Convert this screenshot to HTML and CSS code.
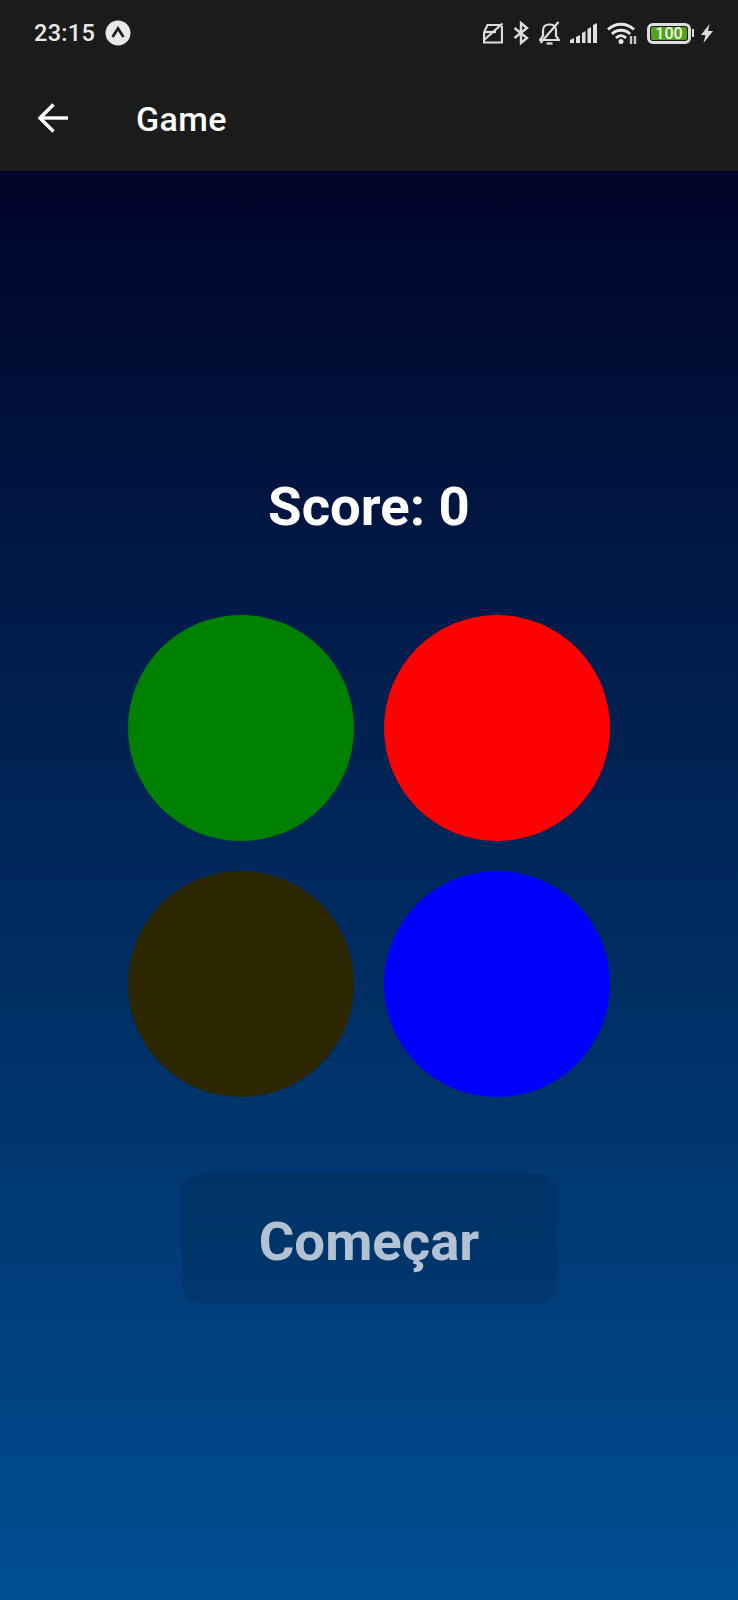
FILE: index.html
```html
<!DOCTYPE html>
<html lang="pt">
<head>
<meta charset="utf-8">
<title>Game</title>
<link rel="stylesheet" href="styles.css">
</head>
<body>
<div class="app">
  <header class="topbar">
    <div class="status">
      <div class="status-left">
        <span class="clock">23:15</span>
        <svg class="expo" viewBox="0 0 26 26"><circle cx="13" cy="13" r="12.5" fill="#e8e8e8"/><path d="M7.500 17 L13 8.500 L18.500 17" fill="none" stroke="#1c1c1c" stroke-width="2.600"/></svg>
      </div>
      <div class="status-right">
        <svg class="ic" width="20" height="22" viewBox="0 0 20 22" fill="none" stroke="#dcdcdc" stroke-width="2.200"><path d="M1.100 10 V20.500 H19 V4"/><path d="M1.100 10 L4.500 3 H19"/><path d="M1 10 H13"/><path d="M1 18 L19.500 1.500"/></svg>
        <svg class="ic" width="16" height="24" viewBox="0 0 16 24" fill="none" stroke="#dcdcdc" stroke-width="2.400"><path d="M1.500 7 L14 17 L8 22 V2 L14 7 L1.500 17"/></svg>
        <svg class="ic" width="21" height="24" viewBox="0 0 21 24" fill="none" stroke="#dcdcdc" stroke-width="2.200"><path d="M1 19 H20 L17 15 V9.500 C17 5.500 14.500 3.500 10.500 3.500 C6.500 3.500 4 5.500 4 9.500 V15 Z"/><path d="M7.500 22.500 H13.500"/><path d="M1.500 22 L19.500 1"/></svg>
        <svg class="ic" width="27" height="20" viewBox="0 0 27 20" fill="#e0e0e0"><polygon points="0,20 0,17 4,15 4,20"/><polygon points="6,20 6,14 10,12 10,20"/><polygon points="12,20 12,10 15.500,8 15.500,20"/><polygon points="17.500,20 17.500,6 21,4 21,20"/><polygon points="23,20 23,2 27,0 27,20"/></svg>
        <svg class="ic" width="30" height="22" viewBox="0 0 30 22" fill="none" stroke="#e8e8e8" stroke-width="3"><path d="M1 7.500 C8.500 0.500 19.500 0.500 27 7.500"/><path d="M5 12 C10 7 18 7 23 12"/><path d="M9 16 C12 13 16 13 19 16"/><circle cx="14" cy="19.500" r="2.500" fill="#e8e8e8" stroke="none"/><path d="M24 14 V22 M28 14 V22" stroke="#c8c8c8" stroke-width="2.400"/></svg>
        <div class="battery-wrap">
          <div class="battery"><span class="level">100</span></div>
          <span class="nub"></span>
        </div>
        <svg class="ic" width="12" height="19" viewBox="0 0 12 19" fill="#dcdcdc"><path d="M8.500 0 L0 11 H4.500 L2.500 19 L12 7 H7 Z"/></svg>
      </div>
    </div>
    <div class="nav">
      <svg class="back" width="30" height="30" viewBox="0 0 30 30" fill="none" stroke="#fff" stroke-width="3.400"><path d="M2 15 H30"/><path d="M15.500 1.500 L2 15 L15.500 28.500"/></svg>
      <h1 class="title">Game</h1>
    </div>
  </header>
  <main class="board">
    <p class="score">Score: 0</p>
    <div class="pads">
      <div class="pad pad-green"></div>
      <div class="pad pad-red"></div>
      <div class="pad pad-yellow"></div>
      <div class="pad pad-blue"></div>
    </div>
    <button class="start" type="button">Começar</button>
  </main>
</div>
</body>
</html>
```

FILE: styles.css
```css
* { box-sizing: border-box; }
html, body { margin: 0; padding: 0; height: 1600px; overflow: hidden; }
body { font-family: Roboto, "Liberation Sans", sans-serif; background: #000; }
.app { width: 738px; height: 1600px; display: flex; flex-direction: column; }
.topbar { height: 171px; background: #1b1b1b; flex: none; }
.status { height: 68px; display: flex; justify-content: space-between; align-items: center; padding: 0 0 2px 34px; }
.status-left { display: flex; align-items: center; gap: 10px; }
.clock { font-size: 23.500px; font-weight: 500; color: #e8e8e8; letter-spacing: 0.3px; }
.expo { width: 26px; height: 26px; display: block; }
.status-right { display: flex; align-items: center; gap: 10px; padding-right: 25px; }
.ic { display: block; flex: none; }
.battery-wrap { display: flex; align-items: center; gap: 1px; margin-right: -3px; }
.battery { width: 44px; height: 21px; border: 3px solid #dedede; border-radius: 6px; padding: 1px; display: flex; }
.level { flex: 1; background: #4fa31a; border-radius: 2px; color: #f2f7ec; font-size: 16px; font-weight: 500; line-height: 13px; text-align: center; }
.nub { width: 2px; height: 8px; background: #dedede; }
.nav { height: 103px; display: flex; align-items: center; padding: 0 0 4px 38px; }
.back { display: block; margin-right: 68px; }
.title { margin: 2px 0 0; font-size: 34px; font-weight: 500; color: #fff; letter-spacing: 0.4px; }
.board { flex: 1; display: flex; flex-direction: column; align-items: center; padding-top: 304px; background: linear-gradient(180deg, #000428 0%, #004e92 100%); }
.score { margin: 0; height: 62px; font-size: 54.500px; line-height: 62px; font-weight: 700; color: #fff; }
.pads { display: grid; grid-template-columns: 226px 226px; grid-auto-rows: 226px; gap: 30px; margin-top: 78px; }
.pad { border-radius: 50%; }
.pad-green { background: #008000; }
.pad-red { background: #ff0000; }
.pad-yellow { background: #2c2700; }
.pad-blue { background: #0000ff; }
.start { width: 376px; height: 131px; margin-top: 76px; padding: 5px 0 0; border: 0; border-radius: 22px; background: rgba(0, 0, 0, 0.1); color: rgba(255, 255, 255, 0.7); font-family: inherit; font-size: 54.500px; font-weight: 700; }
```
